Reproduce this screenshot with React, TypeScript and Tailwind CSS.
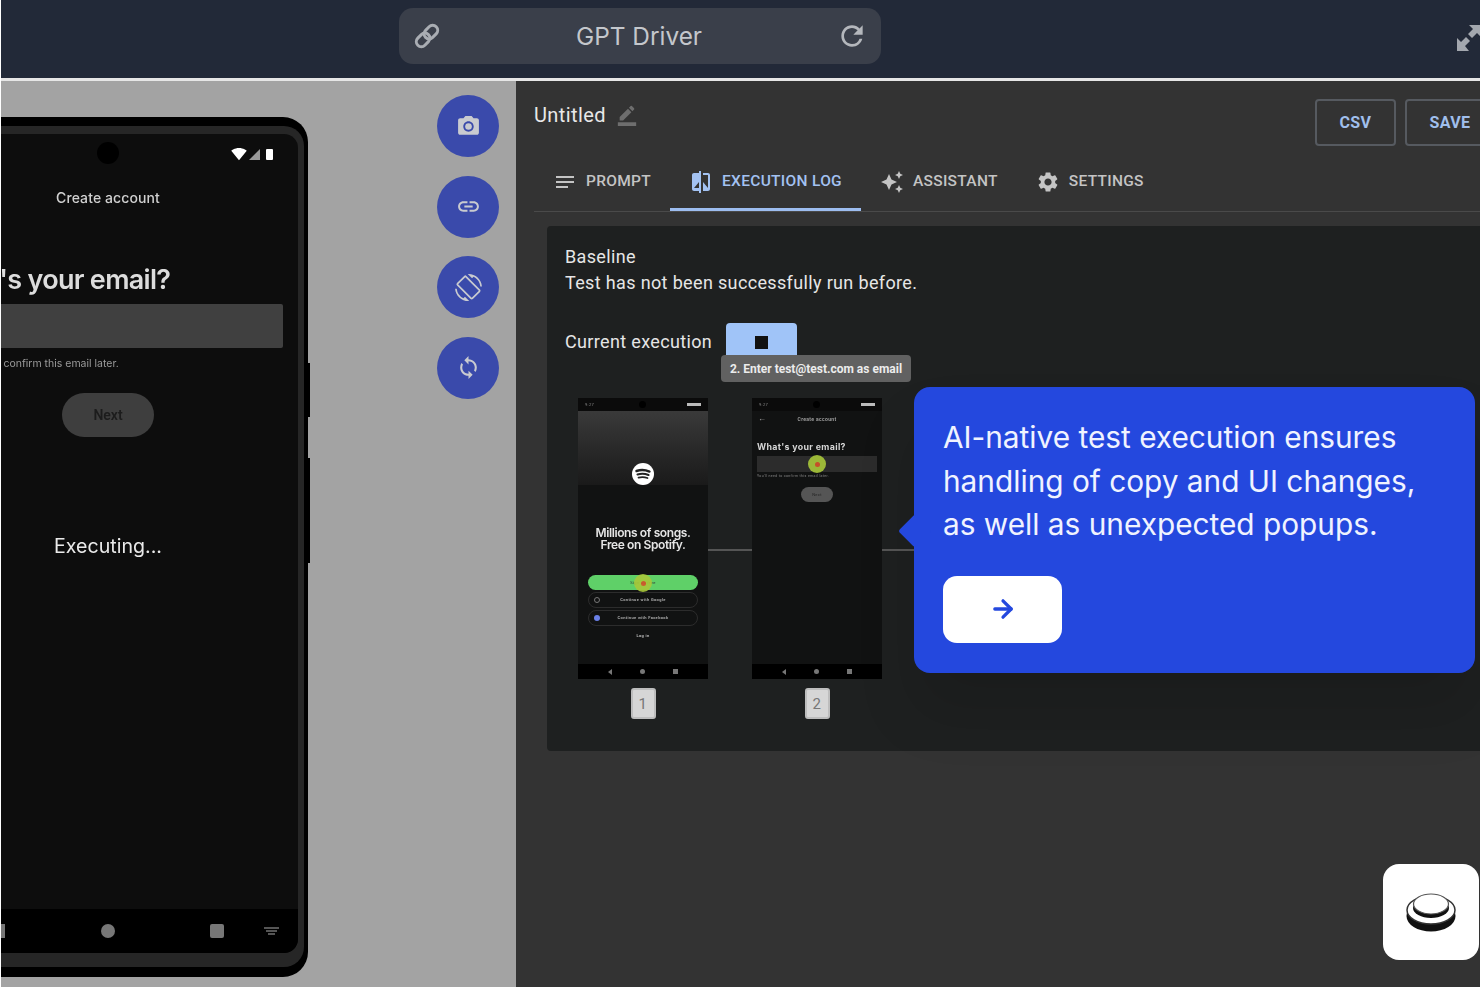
import React from "react";
import { MdCameraAlt, MdLink, MdScreenRotation, MdSync, MdBorderColor, MdNotes, MdCompare, MdAutoAwesome, MdSettings, MdRefresh, MdSignalWifi4Bar } from "react-icons/md";
import { ArrowRight } from "lucide-react";

function ChainIcon() {
  return (
    <svg width="30" height="30" viewBox="0 0 30 30" fill="none" stroke="#a9adb3" strokeWidth="3">
      <g transform="rotate(-45 15 15)">
        <rect x="2" y="10" width="15" height="10" rx="5" />
        <rect x="13" y="10" width="15" height="10" rx="5" />
      </g>
    </svg>
  );
}

function ExpandIcon() {
  return (
    <svg width="26" height="28" viewBox="0 0 26 28" fill="#a3a7ae" stroke="none">
      <path d="M1 27 L1 14 L5 18 L10 13 L14 17 L9 22 L13 27 Z" />
      <path d="M25 1 L13 1 L17 5 L12 10 L16 14 L21 9 L25 13 Z" />
    </svg>
  );
}

function PressButton() {
  return (
    <svg width="52" height="44" viewBox="0 0 52 44" fill="none">
      <ellipse cx="26" cy="26" rx="24.5" ry="15.5" fill="#111" />
      <ellipse cx="26" cy="20" rx="24" ry="14" fill="#fff" stroke="#333" strokeWidth="1.5" />
      <ellipse cx="26" cy="18" rx="18" ry="10" fill="#111" />
      <ellipse cx="26" cy="14" rx="17.5" ry="10" fill="#fff" stroke="#555" strokeWidth="1.2" />
    </svg>
  );
}

function SpotifyMark() {
  return (
    <svg width="22" height="22" viewBox="0 0 22 22" fill="none" stroke="#222" strokeLinecap="round">
      <circle cx="11" cy="11" r="11" fill="#fff" stroke="none" />
      <path d="M4.5 8 Q11 5.8 17.5 8.6" strokeWidth="2.4" />
      <path d="M5.5 11.5 Q11 9.8 16.5 12" strokeWidth="2.1" />
      <path d="M6.5 14.6 Q11 13.4 15.5 15" strokeWidth="1.8" />
    </svg>
  );
}

function RoundButton({ children }: { children: React.ReactNode }) {
  return <div className="w-[62px] h-[62px] rounded-full bg-[#3a4aab] flex items-center justify-center text-[#c9cbd0] text-[25px]">{children}</div>;
}

function Tab({ icon, label, active }: { icon: React.ReactNode; label: string; active?: boolean }) {
  return (
    <div className={active ? "h-[59px] px-[19px] pt-[1px] flex items-center gap-[9px] relative text-[#a3c2f2]" : "h-[59px] px-[19px] pt-[1px] flex items-center gap-[9px] text-[#c4c4c4]"}>
      <span className="text-[24px] w-[24px] flex justify-center">{icon}</span>
      <span className="text-[15.5px] font-medium tracking-[0.3px]">{label}</span>
      {active ? <span className="absolute left-0 right-0 bottom-0 h-[3px] bg-[#9dbdf0]" /> : null}
    </div>
  );
}

function ThumbNav() {
  return (
    <div className="h-[15px] bg-black flex items-center justify-around px-[16px] mt-auto shrink-0">
      <span className="w-0 h-0 border-y-[3px] border-y-transparent border-r-[4px] border-r-[#777]" />
      <span className="w-[5px] h-[5px] rounded-full bg-[#777]" />
      <span className="w-[5px] h-[5px] bg-[#777]" />
    </div>
  );
}

function ThumbStatus() {
  return (
    <div className="h-[13px] bg-[#0b0b0b] flex items-center justify-between px-[7px] relative shrink-0 leading-none">
      <span className="text-[4px] text-[#888]">9:27</span>
      <span className="absolute left-[61px] top-[3px] w-[7px] h-[7px] rounded-full bg-black" />
      <span className="w-[14px] h-[3px] bg-[#bbb]" />
    </div>
  );
}

function Heat({ className }: { className: string }) {
  return (
    <span className={className}>
      <span className="w-[18px] h-[18px] rounded-full bg-[#a9c83a] opacity-90 flex items-center justify-center">
        <span className="w-[5px] h-[5px] rounded-full bg-[#d6542a]" />
      </span>
    </span>
  );
}

function ThumbOne() {
  return (
    <div className="w-[130px] h-[281px] bg-[#111212] flex flex-col relative blur-[0.6px] leading-none">
      <ThumbStatus />
      <div className="h-[74px] bg-gradient-to-b from-[#3a3a3a] to-[#1a1a1a] flex justify-center items-end shrink-0">
        <SpotifyMark />
      </div>
      <div className="mt-[42px] text-center text-[12px] leading-[12px] font-semibold tracking-[-0.4px] text-[#e5e5e5] font-['Inter',sans-serif]">
        Millions of songs.<br />Free on Spotify.
      </div>
      <div className="mx-[10px] mt-[24px] h-[15px] rounded-full bg-[#5fd068] flex items-center justify-center text-[4px] text-[#333] shrink-0">Sign up free</div>
      <div className="mx-[10px] mt-[2px] h-[16px] rounded-full border border-[#2c2c2c] flex items-center justify-center text-[4px] font-bold text-[#aaa] relative shrink-0">
        <span className="absolute left-[5px] w-[6px] h-[6px] rounded-full border border-[#777]" />
        Continue with Google
      </div>
      <div className="mx-[10px] mt-[2px] h-[16px] rounded-full border border-[#2c2c2c] flex items-center justify-center text-[4px] font-bold text-[#aaa] relative shrink-0">
        <span className="absolute left-[5px] w-[6px] h-[6px] rounded-full bg-[#6a80e8]" />
        Continue with Facebook
      </div>
      <div className="mt-[8px] text-center text-[4px] font-bold text-[#bbb]">Log in</div>
      <ThumbNav />
      <Heat className="absolute left-[56px] top-[176px]" />
    </div>
  );
}

function ThumbTwo() {
  return (
    <div className="w-[130px] h-[281px] bg-[#111212] flex flex-col relative blur-[0.6px] leading-none">
      <ThumbStatus />
      <div className="h-[16px] flex items-center justify-center relative text-[5px] font-semibold text-[#a5a5a5] shrink-0">
        <span className="absolute left-[6px] text-[8px] text-[#aaa]">←</span>
        Create account
      </div>
      <div className="mt-[14px] ml-[5px] text-[8.8px] leading-[12px] font-bold text-[#d5d5d5] font-['Inter',sans-serif]">What's your email?</div>
      <div className="mx-[5px] mt-[3px] h-[16px] bg-[#2c2c2c] shrink-0" />
      <div className="mt-[2px] ml-[5px] text-[3.5px] leading-[4px] text-[#888]">You'll need to confirm this email later.</div>
      <div className="self-center mt-[9px] w-[32px] h-[15px] rounded-full bg-[#555] flex items-center justify-center text-[4px] text-[#222] shrink-0">Next</div>
      <ThumbNav />
      <Heat className="absolute left-[56px] top-[57px]" />
    </div>
  );
}

function Chip({ n }: { n: string }) {
  return <div className="mt-[9px] self-center w-[25px] h-[31px] bg-[#d6d6d6] rounded-[3px] border-2 border-[#bdbdbd] flex items-center justify-center text-[15px] text-[#777]">{n}</div>;
}

export default function App() {
  return (
    <div className="w-[1480px] h-[987px] overflow-hidden flex flex-col bg-white pl-px font-['Roboto',sans-serif]">
      <header className="h-[78px] shrink-0 bg-[#222938] flex items-center relative">
        <div className="w-[482px] h-[56px] ml-[398px] -mt-[6px] rounded-[14px] bg-[#3a3f4a] flex items-center justify-between px-[13px] text-[#c4c7cc]">
          <ChainIcon />
          <span className="text-[24.4px] font-['Inter',sans-serif]">GPT Driver</span>
          <MdRefresh className="text-[#b4b7bc] text-[32px]" />
        </div>
        <div className="absolute right-[-2px] top-[24px]">
          <ExpandIcon />
        </div>
      </header>
      <div className="h-[3px] shrink-0 bg-[#e6e6e6]" />
      <main className="flex-1 flex min-h-0">
        <section className="w-[515px] shrink-0 bg-[#a3a3a3] flex overflow-hidden">
          <div className="w-[400px] h-[860px] ml-[-93px] mt-[36px] shrink-0 relative rounded-[25px] bg-black pt-[9px] px-[4px] pb-[10px]">
            <span className="absolute right-[-2px] top-[246px] w-[3px] h-[54px] bg-black" />
            <span className="absolute right-[-2px] top-[341px] w-[3px] h-[105px] bg-black" />
            <div className="h-full rounded-[20px] bg-[#262626] pt-[8px] px-[6px] pb-[14px]">
              <div className="h-full rounded-[14px] bg-[#0d0d0d] overflow-hidden flex flex-col relative blur-[0.6px]">
                <div className="h-[36px] flex items-center justify-center relative shrink-0">
                  <span className="w-[22px] h-[22px] rounded-full bg-black mt-[1px]" />
                  <div className="absolute right-[25px] top-[12px] flex items-center gap-[2px]">
                    <MdSignalWifi4Bar className="text-white text-[16px]" />
                    <span className="w-0 h-0 border-l-[11px] border-l-transparent border-b-[11px] border-b-[#999]" />
                    <span className="w-[7px] h-[11px] bg-white rounded-[1px] ml-[4px]" />
                  </div>
                </div>
                <div className="mt-[17px] text-center text-[14px] font-medium text-[#d0d0d0] tracking-[0.1px] font-['Inter',sans-serif]">Create account</div>
                <div className="mt-[54px] ml-[15px] text-[27px] leading-[36px] font-semibold tracking-[-0.7px] text-[#dcdcdc] font-['Inter',sans-serif]">What's your email?</div>
                <div className="mx-[15px] mt-[6px] h-[44px] shrink-0 bg-[#404040] rounded-[2px]" />
                <div className="mt-[9px] ml-[15px] text-[10.5px] leading-[14px] text-[#9a9a9a] font-['Inter',sans-serif]">You'll need to confirm this email later.</div>
                <div className="mt-[22px] self-center w-[92px] h-[44px] shrink-0 rounded-full bg-[#3e3e3e] flex items-center justify-center text-[14px] font-semibold text-[#1c1c1c]">Next</div>
                <div className="mt-[95px] text-center text-[19.6px] text-[#eaeaea] font-['Inter',sans-serif]">Executing...</div>
                <div className="mt-auto h-[44px] bg-black relative shrink-0 flex items-center">
                  <span className="absolute left-[82px] w-[5px] h-[14px] bg-[#777]" />
                  <span className="absolute left-[183px] w-[14px] h-[14px] rounded-full bg-[#777]" />
                  <span className="absolute left-[292px] w-[14px] h-[14px] rounded-[2px] bg-[#777]" />
                  <span className="absolute left-[346px] flex flex-col items-center gap-[1px]">
                    <span className="w-[15px] h-[2px] bg-[#555]" />
                    <span className="w-[11px] h-[2px] bg-[#555]" />
                    <span className="w-[7px] h-[2px] bg-[#555]" />
                  </span>
                </div>
              </div>
            </div>
          </div>
          <div className="ml-[129px] mt-[14px] flex flex-col gap-[18.5px] shrink-0">
            <RoundButton><MdCameraAlt /></RoundButton>
            <RoundButton><MdLink /></RoundButton>
            <RoundButton><MdScreenRotation className="text-[27px]" /></RoundButton>
            <RoundButton><MdSync /></RoundButton>
          </div>
        </section>
        <section className="flex-1 min-w-0 bg-[#333333] pl-[18px] relative">
          <div className="h-[71px] flex items-start justify-between">
            <div className="flex items-center gap-[10px] mt-[20px] text-[20px] tracking-[0.4px] leading-[28px] text-[#e8e8e8]">
              Untitled
              <MdBorderColor className="text-[#6e6e6e] text-[22px]" />
            </div>
            <div className="flex gap-[9px] mt-[18px] mr-[-15px] text-[16px] font-bold text-[#a0bfec] tracking-[0.4px]">
              <div className="w-[81px] h-[47px] rounded-[4px] border-2 border-[#565a60] flex items-center justify-center">CSV</div>
              <div className="w-[90px] h-[47px] rounded-[4px] border-2 border-[#565a60] flex items-center justify-center">SAVE</div>
            </div>
          </div>
          <div className="flex border-b border-[#4a4a4a] h-[60px]">
            <Tab icon={<MdNotes />} label="PROMPT" />
            <Tab active icon={<MdCompare />} label="EXECUTION LOG" />
            <Tab icon={<MdAutoAwesome />} label="ASSISTANT" />
            <Tab icon={<MdSettings />} label="SETTINGS" />
          </div>
          <div className="mt-[14px] ml-[13px] mr-[-20px] h-[525px] bg-[#1e2020] rounded-[4px] pl-[18px] pt-[18px] relative text-[18px] leading-[26px] tracking-[0.35px] text-[#e6e6e6]">
            <div>Baseline</div>
            <div>Test has not been successfully run before.</div>
            <div className="mt-[27px] flex items-center gap-[14px]">
              <span>Current execution</span>
              <div className="w-[71px] h-[38px] rounded-t-[4px] bg-[#a0c4f8] flex items-center justify-center">
                <span className="w-[13px] h-[13px] bg-[#111]" />
              </div>
            </div>
            <div className="absolute left-[174px] top-[129px] h-[27px] w-[190px] rounded-[4px] bg-[#616161] flex items-center justify-center text-[12px] font-bold text-[#ececec] tracking-normal">
              2. Enter test@test.com as email
            </div>
            <div className="mt-[37px] ml-[13px] flex items-start">
              <div className="flex flex-col">
                <ThumbOne />
                <Chip n="1" />
              </div>
              <div className="w-[44px] h-[2px] bg-[#555] mt-[151px]" />
              <div className="flex flex-col">
                <ThumbTwo />
                <Chip n="2" />
              </div>
              <div className="w-[32px] h-[2px] bg-[#555] mt-[151px]" />
            </div>
            <div className="absolute left-[367px] top-[161px] w-[561px] h-[286px] rounded-[16px] bg-[#2448de] pl-[29px] pt-[29px] shadow-[0_40px_60px_rgba(0,0,0,0.12)] font-['Inter',sans-serif] tracking-normal text-[#f0f3ff]">
              <span className="absolute left-[-11px] top-[132px] w-[24px] h-[24px] rotate-45 rounded-[3px] bg-[#2448de]" />
              <p className="relative text-[29.8px] leading-[43.5px] w-[490px]">AI-native test execution ensures handling of copy and UI changes, as well as unexpected popups.</p>
              <div className="mt-[29px] w-[119px] h-[67px] rounded-[14px] bg-white flex items-center justify-center relative">
                <ArrowRight className="text-[#2448de]" size={28} strokeWidth={2.8} />
              </div>
            </div>
          </div>
          <div className="absolute right-[1px] bottom-[27px] w-[96px] h-[96px] rounded-[16px] bg-white flex items-center justify-center">
            <PressButton />
          </div>
        </section>
      </main>
    </div>
  );
}
